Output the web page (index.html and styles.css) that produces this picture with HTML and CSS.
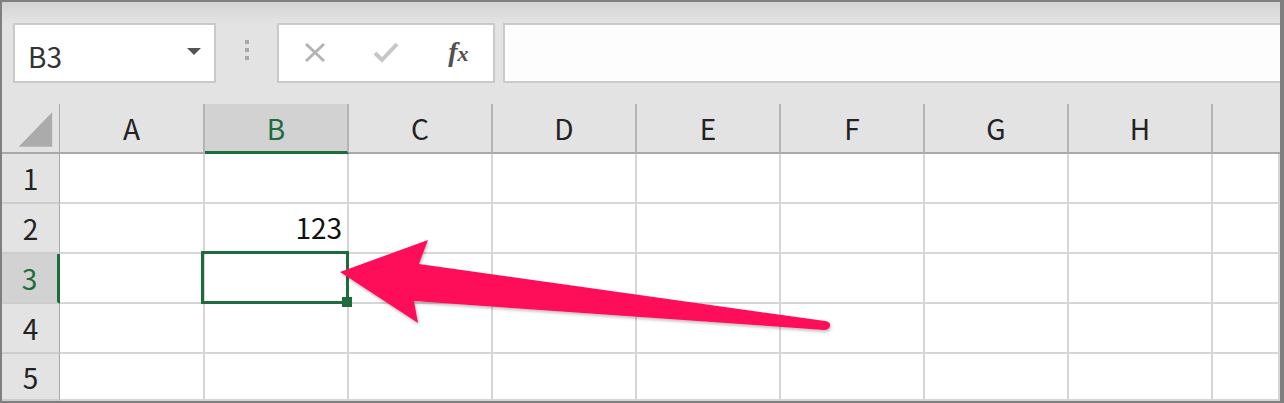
FILE: index.html
```html
<!DOCTYPE html>
<html lang="ja">
<head>
<meta charset="utf-8">
<title>Excel</title>
<link rel="stylesheet" href="styles.css">
</head>
<body>
<div class="frame">
  <div class="toolbar">
    <div class="namebox">
      <span class="nb-text">B3</span>
      <svg class="nb-drop" width="14" height="8" viewBox="0 0 14 8"><polygon points="0,0 14,0 7,7" fill="#555"/></svg>
    </div>
    <div class="grip"><i></i><i></i><i></i></div>
    <div class="fbuttons">
      <span class="fbtn">
        <svg width="24" height="22" viewBox="0 0 24 22"><path d="M3 2 L21 19 M21 2 L3 19" stroke="#b3b3b3" stroke-width="3" fill="none"/></svg>
      </span>
      <span class="fbtn">
        <svg width="28" height="22" viewBox="0 0 28 22"><path d="M3 11 L10 18 L25 2" stroke="#c6c6c6" stroke-width="4" fill="none"/></svg>
      </span>
      <span class="fbtn"><span class="fx">f<span class="fx-x">x</span></span></span>
    </div>
    <div class="finput"></div>
  </div>
  <div class="sheet">
    <div class="corner hdr"><svg width="58" height="50" viewBox="0 0 58 50"><polygon points="51,8 51,43 17,43" fill="#ababab"/></svg></div>
    <div class="hdr col">A</div>
    <div class="hdr col sel">B</div>
    <div class="hdr col">C</div>
    <div class="hdr col">D</div>
    <div class="hdr col">E</div>
    <div class="hdr col">F</div>
    <div class="hdr col">G</div>
    <div class="hdr col">H</div>
    <div class="hdr col last"></div>

    <div class="hdr row">1</div>
    <div class="cell"></div><div class="cell"></div><div class="cell"></div><div class="cell"></div><div class="cell"></div><div class="cell"></div><div class="cell"></div><div class="cell"></div><div class="cell"></div>

    <div class="hdr row">2</div>
    <div class="cell"></div><div class="cell num">123</div><div class="cell"></div><div class="cell"></div><div class="cell"></div><div class="cell"></div><div class="cell"></div><div class="cell"></div><div class="cell"></div>

    <div class="hdr row sel">3</div>
    <div class="cell"></div><div class="cell active"><div class="selbox"><span class="handle"></span></div></div><div class="cell"></div><div class="cell"></div><div class="cell"></div><div class="cell"></div><div class="cell"></div><div class="cell"></div><div class="cell"></div>

    <div class="hdr row">4</div>
    <div class="cell"></div><div class="cell"></div><div class="cell"></div><div class="cell"></div><div class="cell"></div><div class="cell"></div><div class="cell"></div><div class="cell"></div><div class="cell"></div>

    <div class="hdr row">5</div>
    <div class="cell"></div><div class="cell"></div><div class="cell"></div><div class="cell"></div><div class="cell"></div><div class="cell"></div><div class="cell"></div><div class="cell"></div><div class="cell"></div>
  </div>
  <svg class="arrow" width="1284" height="403" viewBox="0 0 1284 403">
    <defs>
      <filter id="sh" x="-10%" y="-30%" width="120%" height="160%">
        <feDropShadow dx="1" dy="2" stdDeviation="1.5" flood-color="#000" flood-opacity="0.25"/>
      </filter>
    </defs>
    <path d="M340 272 L428 240 L419 264 L825 321 Q831 322 830 326 Q829 330 824 330 L414 301 L418 323 Z" fill="#fe1158" filter="url(#sh)"/>
  </svg>
</div>
</body>
</html>
```

FILE: styles.css
```css
* { box-sizing: border-box; }
html, body { margin: 0; padding: 0; background: #fff; }
body { font-family: "Noto Sans CJK JP", "Noto Sans", sans-serif; }

.frame {
  position: relative;
  width: 1284px;
  height: 403px;
  border-style: solid;
  border-color: #7f7f7f;
  border-width: 2px 4px 2px 2px;
  overflow: hidden;
  display: flex;
  flex-direction: column;
  background: #e3e3e3;
}

.toolbar {
  height: 102px;
  flex: none;
  display: flex;
  align-items: flex-start;
  padding: 21px 0 0 11px;
  background: linear-gradient(#d3d3d3 0, #dedede 14px, #e3e3e3 22px);
}

.namebox {
  width: 203px;
  height: 60px;
  background: #fff;
  border: 2px solid #cacaca;
  display: flex;
  align-items: center;
  justify-content: space-between;
  padding: 0 13px 0 13px;
}
.nb-text {
  font-size: 28px;
  color: #333;
  line-height: 1;
  padding-top: 5px;
}
.nb-drop { margin-top: -2px; }

.grip {
  width: 61px;
  height: 60px;
  display: flex;
  flex-direction: column;
  align-items: center;
  justify-content: center;
  gap: 4px;
  padding-bottom: 6px;
}
.grip i {
  display: block;
  width: 4px;
  height: 4px;
  background: #a8a8a8;
}

.fbuttons {
  width: 218px;
  height: 60px;
  background: #fff;
  border: 2px solid #cacaca;
  display: flex;
  align-items: center;
}
.fbtn {
  width: 72px;
  height: 56px;
  display: flex;
  align-items: center;
  justify-content: center;
}
.fbtn svg { display: block; }
.fx {
  font-family: "Liberation Serif", "DejaVu Serif", serif;
  font-style: italic;
  font-weight: bold;
  color: #505050;
  font-size: 28px;
  line-height: 1;
  padding-left: 2px;
  margin-top: -2px;
}
.fx-x { font-size: 22px; }

.finput {
  flex: 1;
  height: 60px;
  margin-left: 8px;
  background: #fdfdfd;
  border: 2px solid #cacaca;
  border-right: none;
}

.sheet {
  flex: 1;
  display: grid;
  grid-template-columns: 58px 145px repeat(7, 144px) 1fr;
  grid-template-rows: 50px repeat(4, 50px) 1fr;
  background: #fff;
}

.hdr {
  background: #e3e3e3;
  color: #222;
  font-size: 28px;
  display: flex;
  align-items: center;
  justify-content: center;
  line-height: 1;
}
.corner {
  border-right: 1px solid #a9a9a9;
  border-bottom: 2px solid #a9a9a9;
  align-items: stretch;
  justify-content: stretch;
}
.corner svg { display: block; }
.hdr.col {
  border-right: 2px solid #b4b4b4;
  border-bottom: 2px solid #a9a9a9;
}
.hdr.col.last { border-right: none; }
.hdr.col.sel {
  background: #d2d2d2;
  color: #1e6b3e;
  border-bottom: 3px solid #1e6b3e;
}
.hdr.row {
  border-right: 1px solid #a9a9a9;
  border-bottom: 2px solid #cdcdcd;
}
.hdr.row.sel {
  background: #d2d2d2;
  color: #1e6b3e;
  border-right: 3px solid #1e6b3e;
}

.cell {
  border-right: 2px solid #d6d6d6;
  border-bottom: 2px solid #d6d6d6;
  background: #fff;
}
.cell.num {
  font-size: 28px;
  color: #111;
  display: flex;
  align-items: center;
  justify-content: flex-end;
  padding: 0 5px 2px 0;
  line-height: 1;
}
.cell.active { position: relative; }
.selbox {
  position: absolute;
  left: -4px;
  top: -3px;
  right: -2px;
  bottom: -2px;
  border: 3px solid #1e6b3e;
}
.handle {
  position: absolute;
  right: -6px;
  bottom: -6px;
  width: 10px;
  height: 10px;
  background: #1e6b3e;
}

.arrow {
  position: absolute;
  left: -2px;
  top: -2px;
  pointer-events: none;
}
```
